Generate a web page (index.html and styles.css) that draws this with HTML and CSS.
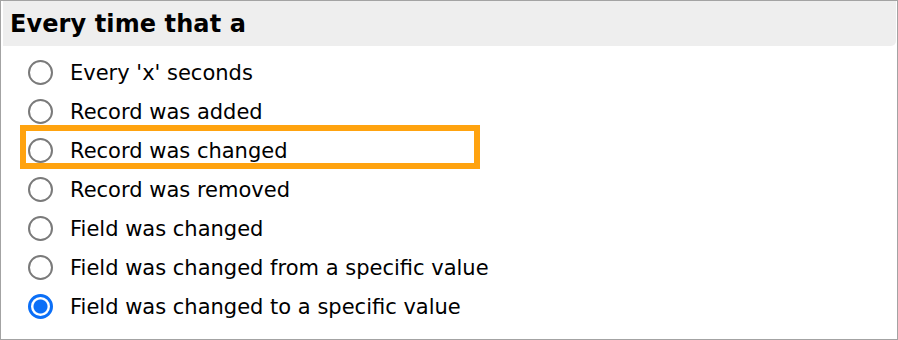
FILE: index.html
```html
<!DOCTYPE html>
<html>
<head>
<meta charset="utf-8">
<link rel="stylesheet" href="styles.css">
</head>
<body>
<div class="panel">
  <div class="header">Every time that a</div>
  <ul class="options">
    <li class="option"><span class="radio"></span><span class="label">Every 'x' seconds</span></li>
    <li class="option"><span class="radio"></span><span class="label">Record was added</span></li>
    <li class="option"><span class="radio"></span><span class="label">Record was changed</span><span class="highlight"></span></li>
    <li class="option"><span class="radio"></span><span class="label">Record was removed</span></li>
    <li class="option"><span class="radio"></span><span class="label">Field was changed</span></li>
    <li class="option"><span class="radio"></span><span class="label">Field was changed from a specific value</span></li>
    <li class="option"><span class="radio checked"></span><span class="label">Field was changed to a specific value</span></li>
  </ul>
</div>
</body>
</html>
```
FILE: styles.css
```css
html, body {
  margin: 0;
  padding: 0;
  background: #ffffff;
}
.panel {
  width: 898px;
  height: 340px;
  box-sizing: border-box;
  border: 1px solid #a3a3a3;
  font-family: "DejaVu Sans", "Liberation Sans", sans-serif;
  color: #000;
  overflow: hidden;
}
.header {
  margin: 0 1px 0 2px;
  height: 45px;
  line-height: 46px;
  background: #eeeeee;
  border-radius: 0 0 5px 0;
  padding-left: 7px;
  font-weight: bold;
  font-size: 24px;
  letter-spacing: 0.1px;
}
.options {
  list-style: none;
  margin: 7px 0 0 0;
  padding: 0;
}
.option {
  position: relative;
  height: 39px;
  display: flex;
  align-items: center;
  padding-left: 27px;
}
.radio {
  width: 25px;
  height: 25px;
  box-sizing: border-box;
  border: 2px solid #7a7a7a;
  border-radius: 50%;
  flex: none;
  margin-right: 17px;
}
.radio.checked {
  border: 3px solid #0b6ff7;
  background: radial-gradient(circle, #0b6ff7 0 6.5px, #ffffff 7.5px);
}
.label {
  font-size: 21px;
  white-space: nowrap;
}
.highlight {
  position: absolute;
  left: 19px;
  top: -6px;
  width: 460px;
  height: 44px;
  box-sizing: border-box;
  border: 6px solid #ffa30f;
}
```
